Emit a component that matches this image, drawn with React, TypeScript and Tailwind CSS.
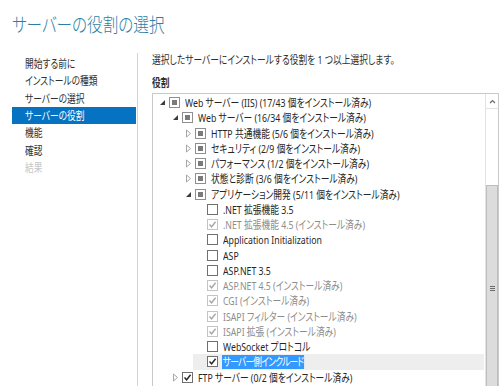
import React from "react";

type Row = {
  level: number;
  expander?: "open" | "closed";
  box: "tri" | "off" | "on" | "done";
  label: string;
  selected?: boolean;
};

const rows: Row[] = [
  { level: 0, expander: "open", box: "tri", label: "Web サーバー (IIS) (17/43 個をインストール済み)" },
  { level: 1, expander: "open", box: "tri", label: "Web サーバー (16/34 個をインストール済み)" },
  { level: 2, expander: "closed", box: "tri", label: "HTTP 共通機能 (5/6 個をインストール済み)" },
  { level: 2, expander: "closed", box: "tri", label: "セキュリティ (2/9 個をインストール済み)" },
  { level: 2, expander: "closed", box: "tri", label: "パフォーマンス (1/2 個をインストール済み)" },
  { level: 2, expander: "closed", box: "tri", label: "状態と診断 (3/6 個をインストール済み)" },
  { level: 2, expander: "open", box: "tri", label: "アプリケーション開発 (5/11 個をインストール済み)" },
  { level: 3, box: "off", label: ".NET 拡張機能 3.5" },
  { level: 3, box: "done", label: ".NET 拡張機能 4.5 (インストール済み)" },
  { level: 3, box: "off", label: "Application Initialization" },
  { level: 3, box: "off", label: "ASP" },
  { level: 3, box: "off", label: "ASP.NET 3.5" },
  { level: 3, box: "done", label: "ASP.NET 4.5 (インストール済み)" },
  { level: 3, box: "done", label: "CGI (インストール済み)" },
  { level: 3, box: "done", label: "ISAPI フィルター (インストール済み)" },
  { level: 3, box: "done", label: "ISAPI 拡張 (インストール済み)" },
  { level: 3, box: "off", label: "WebSocket プロトコル" },
  { level: 3, box: "on", label: "サーバー側インクルード", selected: true },
  { level: 1, expander: "closed", box: "on", label: "FTP サーバー (0/2 個をインストール済み)" },
];

const indent = ["pl-[2px]", "pl-[15px]", "pl-[28px]", "pl-[40px]"];

const nav = [
  { label: "開始する前に" },
  { label: "インストールの種類" },
  { label: "サーバーの選択" },
  { label: "サーバーの役割", active: true },
  { label: "機能" },
  { label: "確認" },
  { label: "結果", disabled: true },
];

// Meiryo UI is much narrower than anything installed, so squeeze the glyphs
const narrow = "inline-block origin-left scale-x-[0.76] whitespace-nowrap";

function Expander({ kind }: { kind?: "open" | "closed" }) {
  if (!kind) return <span className="w-[14px] shrink-0" />;
  return (
    <span className="w-[14px] h-[15px] shrink-0 flex items-center justify-center">
      {kind === "open" ? (
        <svg width="7" height="7" viewBox="0 0 7 7">
          <path d="M6 1 L6 6 L1 6 Z" fill="#3c3c3c" />
        </svg>
      ) : (
        <svg width="7" height="9" viewBox="0 0 7 9">
          <path d="M1.5 1 L5.5 4.5 L1.5 8 Z" fill="none" stroke="#a6a6a6" strokeWidth="1" />
        </svg>
      )}
    </span>
  );
}

function Check({ kind }: { kind: Row["box"] }) {
  if (kind === "tri") {
    return (
      <span className="w-[11px] h-[11px] shrink-0 border border-[#8f8f8f] bg-white flex items-center justify-center">
        <span className="w-[5px] h-[5px] bg-[#7a7a7a]" />
      </span>
    );
  }
  const done = kind === "done";
  return (
    <span
      className={
        done
          ? "w-[11px] h-[11px] shrink-0 border border-[#c4c4c4] bg-white flex items-center justify-center"
          : "w-[11px] h-[11px] shrink-0 border border-[#707070] bg-white flex items-center justify-center"
      }
    >
      {kind !== "off" && (
        <svg width="9" height="9" viewBox="0 0 9 9">
          <path
            d="M1.5 4.5 L3.6 6.8 L7.6 1.8"
            fill="none"
            stroke={done ? "#a8a8a8" : "#262626"}
            strokeWidth="1.4"
          />
        </svg>
      )}
    </span>
  );
}

function TreeRow({ row }: { row: Row }) {
  return (
    <div className={"h-[15.25px] flex " + indent[row.level]}>
      <div
        className={
          row.selected
            ? "flex-1 flex items-center bg-[#eeeeee]"
            : "flex-1 flex items-center"
        }
      >
        <Expander kind={row.expander} />
        <Check kind={row.box} />
        <span
          className={
            row.selected
              ? narrow + " ml-[4px] px-[1px] tracking-[-1px] bg-[#3399ff] text-white leading-[14px]"
              : row.box === "done"
              ? narrow + " ml-[5px] text-[#8d8d8d]"
              : narrow + " ml-[5px] text-[#262626]"
          }
        >
          {row.label}
        </span>
      </div>
    </div>
  );
}

export default function App() {
  return (
    <div className="w-[500px] h-[386px] bg-white overflow-hidden font-['Noto_Sans','Noto_Sans_CJK_JP',sans-serif] [font-feature-settings:'palt'] text-[11.5px] text-[#262626]">
      <div className="h-[53px] pl-[12px] pt-[11px]">
        <h1 className="text-[19.5px] leading-[28px] text-[#2c7ea3] font-light">
          <span className="inline-block origin-left scale-x-[0.8] whitespace-nowrap">サーバーの役割の選択</span>
        </h1>
      </div>
      <div className="flex h-[333px]">
        <div className="w-[138px] shrink-0 pl-[12px] pr-[1px] pt-[2px] border-r border-[#d4d4d4]">
          {nav.map((n) => (
            <div
              key={n.label}
              className={
                n.active
                  ? "h-[17.3px] pl-[13px] flex items-center bg-[#0672c2] text-white"
                  : n.disabled
                  ? "h-[17.3px] pl-[13px] flex items-center text-[#c6c6c6]"
                  : "h-[17.3px] pl-[13px] flex items-center text-[#303030]"
              }
            >
              <span className={narrow}>{n.label}</span>
            </div>
          ))}
        </div>
        <div className="flex-1 pl-[14px]">
          <p className="h-[13px] leading-[13px] text-[11.5px] text-[#303030]">
            <span className={narrow}>選択したサーバーにインストールする役割を 1 つ以上選択します。</span>
          </p>
          <p className="mt-[10px] h-[14px] leading-[14px] text-[11.5px] font-bold text-[#303030]">
            <span className={narrow}>役割</span>
          </p>
          <div className="mt-[3px] mr-[1px] h-[300px] border border-[#c9c9c9] flex">
            <div className="flex-1 pt-[1px] pr-[1px] overflow-hidden">
              {rows.map((r, i) => (
                <TreeRow key={i} row={r} />
              ))}
            </div>
            <div className="w-[13px] shrink-0 flex flex-col border-l border-[#e3e3e3]">
              <div className="h-[15px] flex items-center justify-center border-b border-[#e3e3e3]">
                <svg width="7" height="5" viewBox="0 0 7 5">
                  <path d="M1 4 L3.5 1.5 L6 4" fill="none" stroke="#6b6b6b" strokeWidth="1.2" />
                </svg>
              </div>
              <div className="h-[76px]" />
              <div className="flex-1 bg-[#dcdcdc] border border-[#bdbdbd] flex items-center justify-center">
                <div className="flex flex-col gap-[1px]">
                  <span className="w-[5px] h-[1px] bg-[#6b6b6b]" />
                  <span className="w-[5px] h-[1px] bg-[#6b6b6b]" />
                  <span className="w-[5px] h-[1px] bg-[#6b6b6b]" />
                </div>
              </div>
            </div>
          </div>
        </div>
      </div>
    </div>
  );
}
